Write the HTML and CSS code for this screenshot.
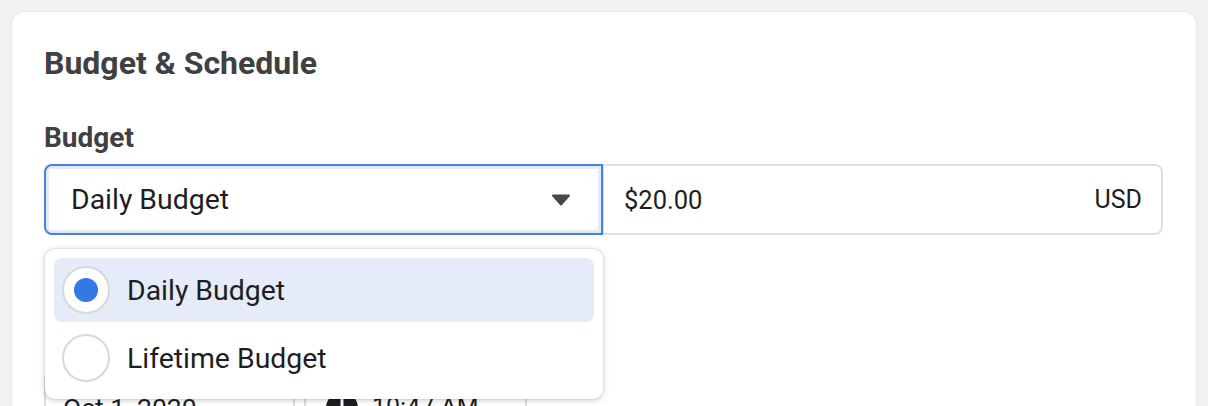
FILE: index.html
```html
<!DOCTYPE html>
<html lang="en">
<head>
<meta charset="utf-8">
<title>Budget &amp; Schedule</title>
<link rel="stylesheet" href="styles.css">
</head>
<body>
<div class="card">
  <h1 class="title">Budget &amp; Schedule</h1>
  <div class="label">Budget</div>
  <div class="budget-row">
    <div class="select">
      <span class="select-text">Daily Budget</span>
      <svg class="caret" width="20" height="12" viewBox="0 0 20 12"><path d="M2 1.5 H18 L10 10.5 Z" fill="#444950" stroke="#444950" stroke-width="2" stroke-linejoin="round"/></svg>
    </div>
    <div class="amount">
      <span class="amount-value">$20.00</span>
      <span class="currency">USD</span>
    </div>
    <div class="menu">
      <div class="option selected">
        <span class="radio"><span class="dot"></span></span>
        <span class="option-text">Daily Budget</span>
      </div>
      <div class="option">
        <span class="radio"></span>
        <span class="option-text">Lifetime Budget</span>
      </div>
    </div>
  </div>
  <div class="dt-row">
    <div class="date-field">Oct 1, 2020</div>
    <div class="time-field">
      <svg class="clock" width="32" height="32" viewBox="0 0 32 32"><circle cx="16" cy="16" r="16" fill="#1c1e21"/><path d="M16 7 V16 L22 21" fill="none" stroke="#fff" stroke-width="3" stroke-linecap="round"/></svg>
      <span>10:47 AM</span>
    </div>
  </div>
</div>
</body>
</html>
```
FILE: styles.css
```css
* { box-sizing: border-box; }
html, body { height: 100%; }
body {
  margin: 0;
  padding: 12px 12px 0;
  background: #f1f2f2;
  font-family: Roboto, "Liberation Sans", sans-serif;
  color: #1c1e21;
  overflow: hidden;
}
.card {
  background: #fff;
  border-radius: 12px 12px 0 0;
  box-shadow: 0 0 2px rgba(0, 0, 0, 0.12);
  padding: 33px 33px 40px 32px;
  min-height: 520px;
}
.title {
  margin: 0;
  font-size: 32px;
  line-height: 36px;
  font-weight: 700;
  color: #404040;
}
.label {
  margin-top: 41px;
  font-size: 28px;
  line-height: 32px;
  font-weight: 700;
  color: #404040;
}
.budget-row {
  position: relative;
  margin-top: 10px;
  display: flex;
  height: 71px;
}
.select {
  flex: none;
  width: 559px;
  display: flex;
  align-items: center;
  justify-content: space-between;
  padding: 0 30px 0 25px;
  border: 2px solid #4a80e2;
  border-radius: 8px 0 0 8px;
  box-shadow: inset 0 0 0 3px #e3ebfa;
  font-size: 28.4px;
}
.caret { display: block; }
.amount {
  flex: 1;
  display: flex;
  align-items: center;
  justify-content: space-between;
  padding: 0 19px 0 20px;
  border: 2px solid #dcdee1;
  border-left-width: 1px;
  border-radius: 0 8px 8px 0;
  font-size: 25.5px;
}
.currency { font-size: 25px; }
.menu {
  position: absolute;
  top: calc(100% + 14px);
  left: 1px;
  width: 558px;
  padding: 9px;
  background: #fff;
  border-radius: 10px;
  box-shadow: 0 1px 6px rgba(0, 0, 0, 0.22), 0 0 0 1px rgba(0, 0, 0, 0.04);
  display: flex;
  flex-direction: column;
  gap: 4px;
  z-index: 2;
}
.option {
  height: 64px;
  display: flex;
  align-items: center;
  gap: 17px;
  padding-left: 8px;
  border-radius: 8px;
  font-size: 28.4px;
  color: #1c1e21;
}
.option.selected { background: #e5ebf9; }
.radio {
  width: 48px;
  height: 48px;
  border-radius: 50%;
  border: 2px solid #d6d8db;
  background: #fff;
  display: flex;
  align-items: center;
  justify-content: center;
}
.dot {
  width: 24px;
  height: 24px;
  border-radius: 50%;
  background: #3578e5;
}
.dt-row {
  margin-top: 137px;
  display: flex;
  gap: 9px;
}
.date-field {
  width: 251px;
  height: 71px;
  display: flex;
  align-items: center;
  padding-left: 17px;
  border: 2px solid #dcdee1;
  border-radius: 8px 0 0 8px;
  font-size: 26.5px;
}
.time-field {
  width: 223px;
  height: 71px;
  display: flex;
  align-items: center;
  gap: 14px;
  padding-left: 20px;
  border: 2px solid #dcdee1;
  font-size: 25px;
}
.clock { display: block; }
```
